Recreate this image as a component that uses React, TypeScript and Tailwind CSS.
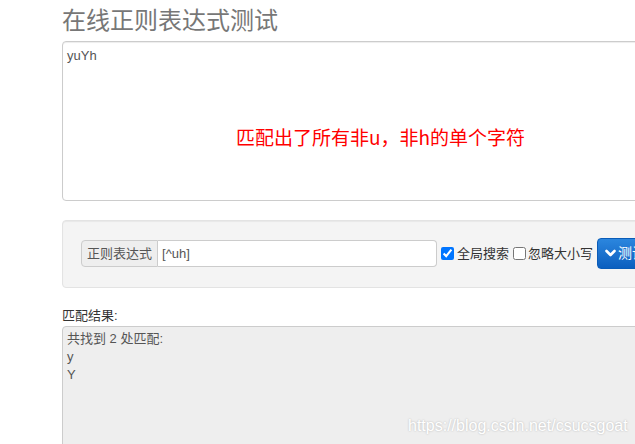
import React from 'react';

const font = "font-['Liberation_Sans','Noto_Sans_CJK_SC',sans-serif]";

function ChevronDown() {
  return (
    <svg width="11" height="9" viewBox="0 0 11 9" className="mr-[2px]">
      <polyline points="1.5,2 5.5,6 9.5,2" fill="none" stroke="white" strokeWidth="2.6" strokeLinecap="round" strokeLinejoin="round" />
    </svg>
  );
}

export default function App() {
  return (
    <div className={`relative w-[635px] h-[444px] overflow-hidden bg-white ${font}`}>
      <div className="w-[720px] pl-[62px] flex flex-col">
        <div className="h-[41px] flex items-center text-[24px] text-[#777] leading-none">
          在线正则表达式测试
        </div>

        <div className="h-[160px] border border-[#ccc] rounded-l-[4px] shadow-[inset_0_1px_1px_rgba(0,0,0,0.075)] px-[4px] py-[5px] text-[13px] leading-[18px] text-[#555]">
          yuYh
        </div>

        <div className="mt-[19px] h-[68px] bg-[#f4f4f4] border border-[#e3e3e3] rounded-l-[4px] shadow-[inset_0_1px_1px_rgba(0,0,0,0.05)] pl-[18px] pt-[18px]">
          <div className="flex items-center h-[29px] text-[13px] text-[#555]">
            <div className="h-[27px] flex items-center px-[5px] bg-[#eee] border border-[#ccc] rounded-l-[4px]">
              正则表达式
            </div>
            <div className="h-[27px] w-[279px] flex items-center px-[4px] bg-white border border-l-0 border-[#ccc] rounded-r-[4px]">
              [^uh]
            </div>
            <label className="flex items-center ml-[4px] text-[#333]">
              <input type="checkbox" defaultChecked className="m-0 w-[13px] h-[13px] accent-[#0075ff]" />
              <span className="ml-[3px]">全局搜索</span>
            </label>
            <label className="flex items-center ml-[4px] text-[#333]">
              <input type="checkbox" className="m-0 w-[13px] h-[13px]" />
              <span className="ml-[2px]">忽略大小写</span>
            </label>
            <button className="ml-[4px] h-[31px] w-[80px] flex items-center pl-[7px] rounded-[4px] border border-[#0a5cb8] bg-gradient-to-b from-[#2b86de] to-[#0b5fbf] text-white text-[14px]">
              <ChevronDown />
              测试
            </button>
          </div>
        </div>

        <div className="mt-[19px] text-[13px] leading-[18px] text-[#333]">匹配结果:</div>
        <div className="mt-[1px] h-[200px] bg-[#eee] border border-[#ccc] rounded-l-[4px] px-[4px] pt-[3px] text-[13px] leading-[18px] text-[#555]">
          <div>共找到 2 处匹配:</div>
          <div>y</div>
          <div>Y</div>
        </div>
      </div>

      <div className="absolute left-[236px] top-[127px] text-[19px] leading-[19px] text-[#ff0000] font-['Noto_Sans_CJK_SC',sans-serif]">
        匹配出了所有非u，非h的单个字符
      </div>

      <div className="absolute left-[408px] top-[417px] text-[16px] leading-[18px] text-white [text-shadow:0_0_2px_rgba(0,0,0,0.25)]">
        https://blog.csdn.net/csucsgoat
      </div>
    </div>
  );
}
